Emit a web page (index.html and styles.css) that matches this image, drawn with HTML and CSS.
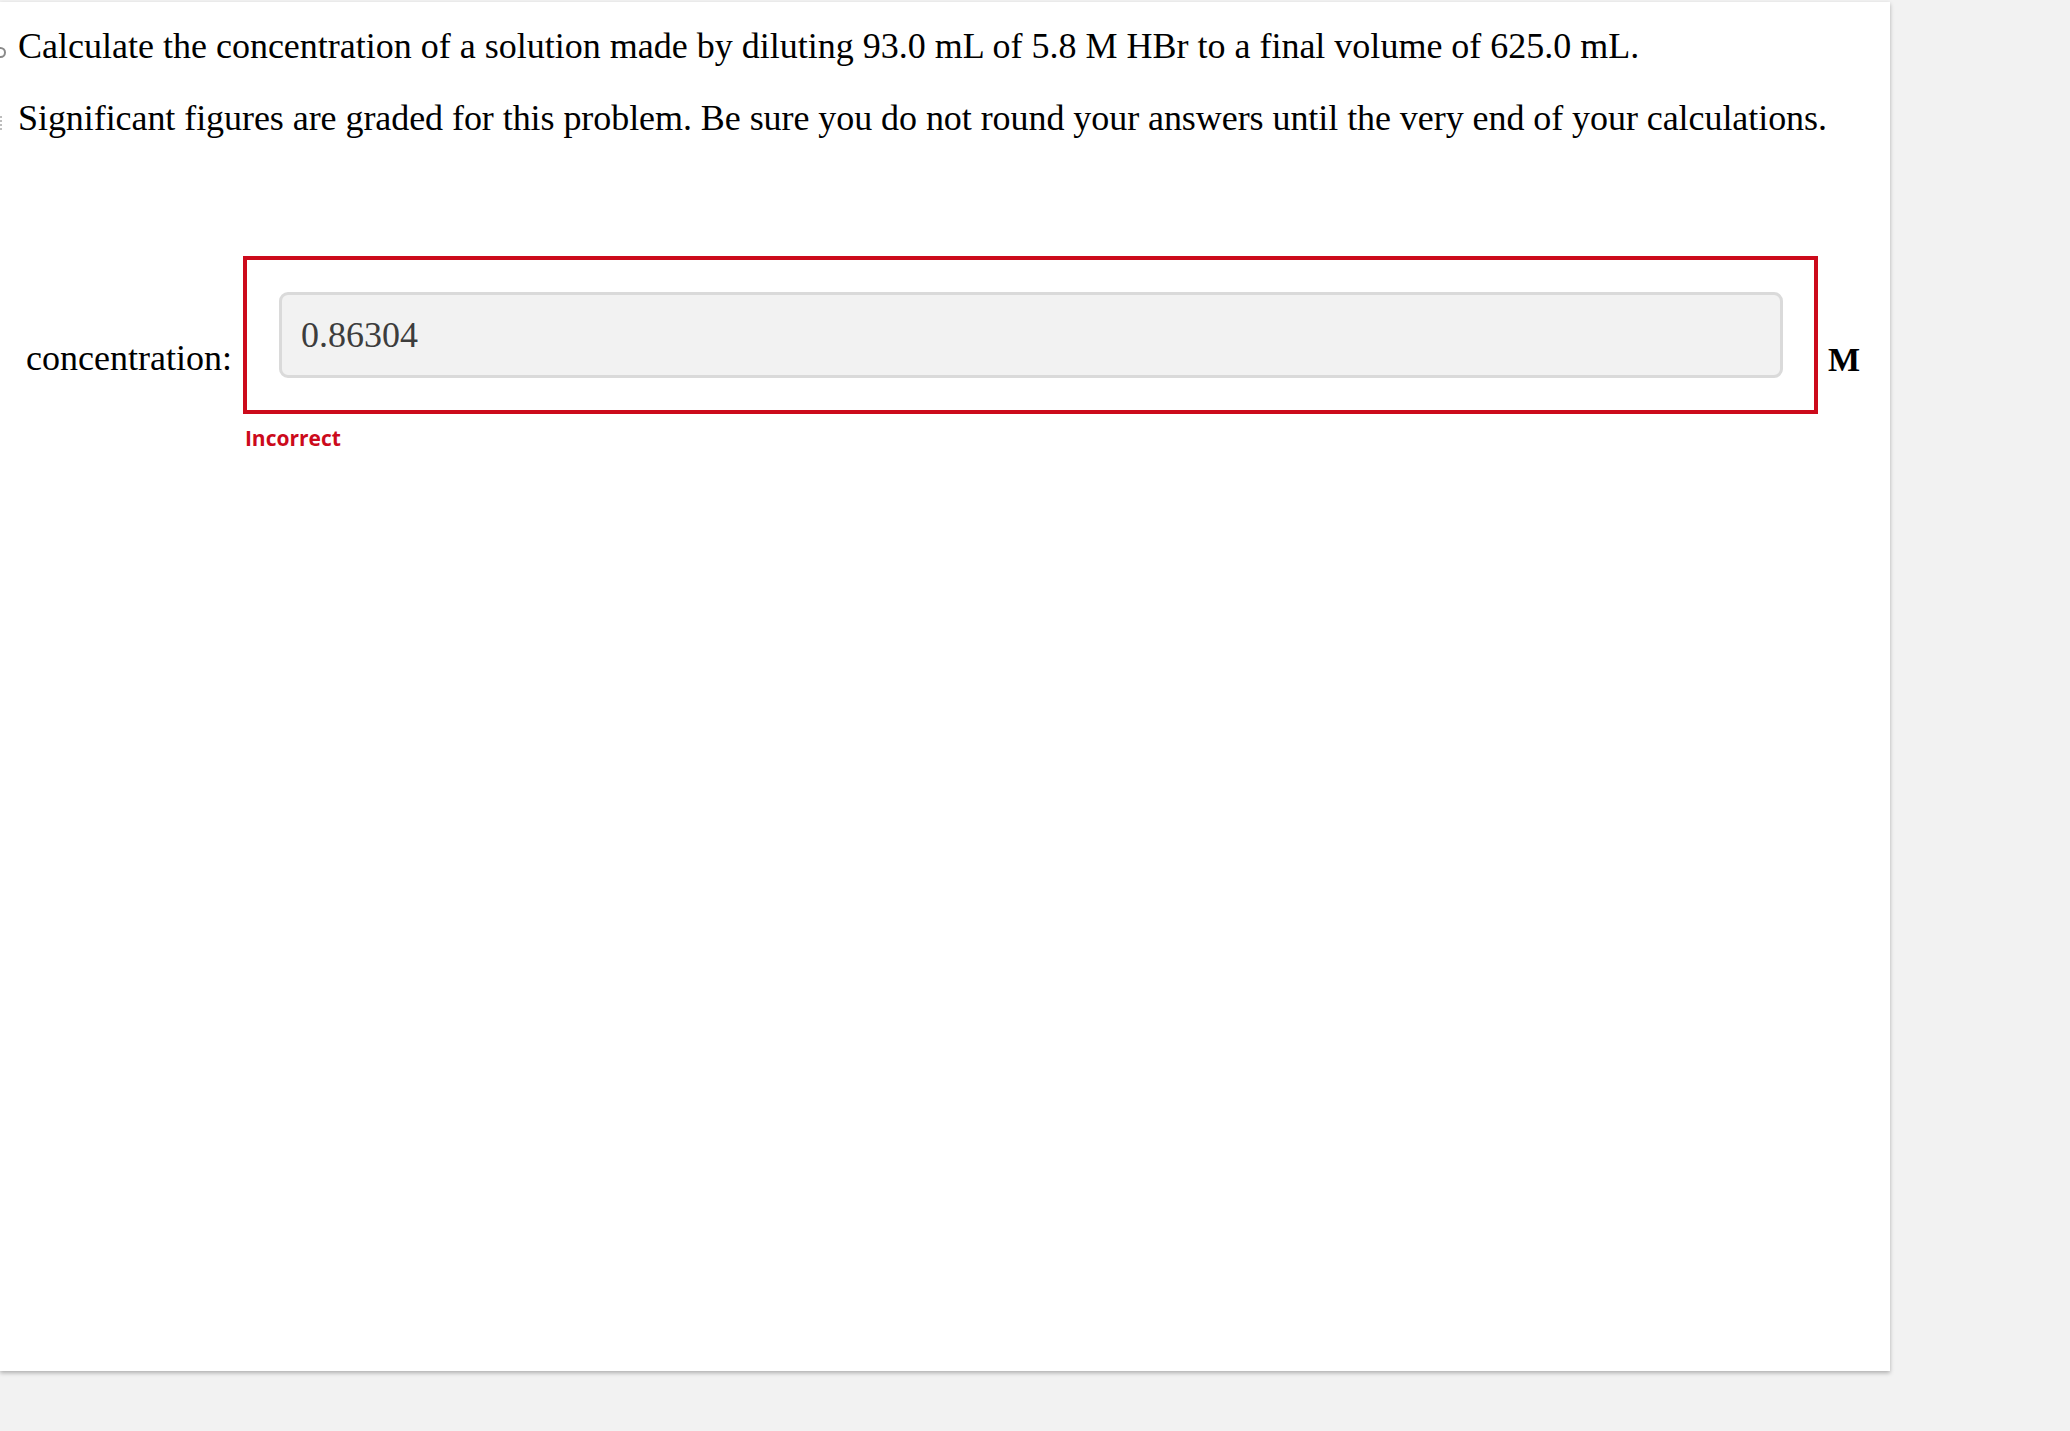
FILE: index.html
```html
<!DOCTYPE html>
<html lang="en">
<head>
<meta charset="utf-8">
<title>Dilution problem</title>
<link rel="stylesheet" href="styles.css">
</head>
<body>
<div class="panel">
  <p class="question"><span class="cut ring"></span>Calculate the concentration of a solution made by diluting 93.0 mL of 5.8 M HBr to a final volume of 625.0 mL.</p>
  <p class="question second"><span class="cut tick"></span>Significant figures are graded for this problem. Be sure you do not round your answers until the very end of your calculations.</p>
  <div class="answer-row">
    <div class="label">concentration:</div>
    <div class="answer-col">
      <div class="answer-box">
        <div class="answer-input">0.86304</div>
      </div>
      <div class="feedback">Incorrect</div>
    </div>
    <div class="unit">M</div>
  </div>
</div>
</body>
</html>
```

FILE: styles.css
```css
html, body {
  margin: 0;
  padding: 0;
}
body {
  background: #f2f2f2;
  width: 2070px;
  height: 1431px;
  overflow: hidden;
  font-family: "Liberation Serif", "Times New Roman", serif;
  color: #000;
}
.panel {
  margin-top: 2px;
  width: 1890px;
  height: 1369px;
  background: #fff;
  box-shadow: 0 2px 4px rgba(0, 0, 0, 0.28);
  padding-top: 24px;
  box-sizing: border-box;
  overflow: hidden;
}
.question {
  margin: 0 0 32px 0;
  padding-left: 18px;
  font-size: 36px;
  line-height: 40px;
  white-space: nowrap;
}
.question.second {
  letter-spacing: -0.06px;
}
.cut {
  display: inline-block;
  vertical-align: baseline;
  box-sizing: border-box;
}
.cut.ring {
  width: 11px;
  height: 11px;
  border: 2px solid #8a8a8a;
  border-radius: 50%;
  margin-left: -23px;
  margin-right: 12px;
}
.cut.tick {
  width: 2px;
  height: 14px;
  border-left: 2px dotted #bdbdbd;
  margin-left: -18px;
  margin-right: 16px;
}
.answer-row {
  display: flex;
  align-items: flex-start;
  margin-top: 118px;
  padding-left: 26px;
}
.label {
  font-size: 36px;
  line-height: 40px;
  padding-top: 82px;
  margin-right: 11px;
  white-space: nowrap;
}
.answer-col {
  display: flex;
  flex-direction: column;
}
.answer-box {
  width: 1575px;
  height: 158px;
  box-sizing: border-box;
  border: 4px solid #cc0a1b;
  padding: 32px 31px 32px 32px;
}
.answer-input {
  height: 86px;
  box-sizing: border-box;
  border: 3px solid #dadada;
  border-radius: 9px;
  background: #f2f2f2;
  padding-left: 19px;
  font-size: 36px;
  line-height: 80px;
  color: #3d3d3d;
}
.feedback {
  margin-top: 9px;
  margin-left: 2px;
  font-family: "Open Sans", "Liberation Sans", sans-serif;
  font-weight: 700;
  font-size: 21px;
  line-height: 30px;
  color: #cc0a1b;
}
.unit {
  font-size: 34px;
  font-weight: 700;
  line-height: 40px;
  padding-top: 84px;
  margin-left: 10px;
}
```
